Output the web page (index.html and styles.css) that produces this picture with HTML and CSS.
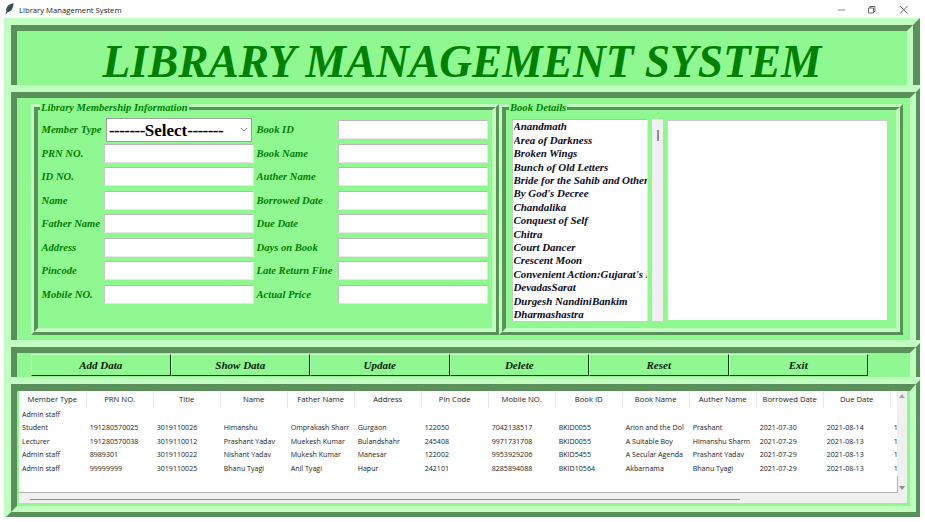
FILE: index.html
```html
<!DOCTYPE html>
<html lang="en">
<head>
<meta charset="utf-8">
<title>Library Management System</title>
<link rel="stylesheet" href="styles.css">
</head>
<body>
<header class="titlebar">
  <svg class="feather" viewBox="0 0 9 11"><path d="M8.6 0.2C5.2 0.6 2.2 2.6 1.4 5.4 1 6.8 1.1 7.8 1.4 8.6L0.6 10.6 1.5 10.9 2.4 9.2C5 9 7 7.2 7.8 4.6 8.3 3 8.5 1.6 8.6 0.2Z" fill="#3d4a63"/></svg>
  <span class="app-name">Library Management System</span>
  <div class="controls">
    <svg class="ctl" viewBox="0 0 10 10"><path d="M0 5H7" stroke="#8a8a8a" stroke-width="1" fill="none"/></svg>
    <svg class="ctl" viewBox="0 0 10 10"><path d="M0.5 3H5.5V8H0.5ZM2 3V1.5H7V6.5H5.5" stroke="#555" stroke-width="0.9" fill="none"/></svg>
    <svg class="ctl" viewBox="0 0 10 10"><path d="M2 1L9.5 8.5M9.5 1L2 8.5" stroke="#555" stroke-width="0.9" fill="none"/></svg>
  </div>
</header>
<main class="app">
  <section class="clip clip-title">
    <div class="ridge ridge-big h-title"><div class="groove groove-big title-inner">
      <h1 class="heading">LIBRARY MANAGEMENT SYSTEM</h1>
    </div></div>
  </section>
  <section class="clip clip-main">
    <div class="ridge ridge-big h-main wide"><div class="groove groove-big main-inner">
      <div class="ridge ridge-small box-member"><div class="groove groove-small member-inner">
        <div class="legend legend-member">Library Membership Information</div>
        <div class="form-grid">
          <label class="lbl">Member Type</label><div class="combo"><span class="combo-text"><span class="dash">-------</span>Select<span class="dash">-------</span></span><svg class="chev" viewBox="0 0 8 5"><path d="M1 1L4 4L7 1" stroke="#888" stroke-width="0.9" fill="none"/></svg></div>
          <label class="lbl">Book ID</label><input class="entry">
          <label class="lbl">PRN NO.</label><input class="entry">
          <label class="lbl">Book Name</label><input class="entry">
          <label class="lbl">ID NO.</label><input class="entry">
          <label class="lbl">Auther Name</label><input class="entry">
          <label class="lbl">Name</label><input class="entry">
          <label class="lbl">Borrowed Date</label><input class="entry">
          <label class="lbl">Father Name</label><input class="entry">
          <label class="lbl">Due Date</label><input class="entry">
          <label class="lbl">Address</label><input class="entry">
          <label class="lbl">Days on Book</label><input class="entry">
          <label class="lbl">Pincode</label><input class="entry">
          <label class="lbl">Late Return Fine</label><input class="entry">
          <label class="lbl">Mobile NO.</label><input class="entry">
          <label class="lbl">Actual Price</label><input class="entry">
        </div>
      </div></div>
      <div class="ridge ridge-small box-book"><div class="groove groove-small book-inner">
        <div class="legend legend-book">Book Details</div>
        <ul class="listbox">
          <li>Anandmath</li>
          <li>Area of Darkness</li>
          <li>Broken Wings</li>
          <li>Bunch of Old Letters</li>
          <li>Bride for the Sahib and Other</li>
          <li>By God's Decree</li>
          <li>Chandalika</li>
          <li>Conquest of Self</li>
          <li>Chitra</li>
          <li>Court Dancer</li>
          <li>Crescent Moon</li>
          <li>Convenient Action:Gujarat's R</li>
          <li>DevadasSarat</li>
          <li>Durgesh NandiniBankim</li>
          <li>Dharmashastra</li>
        </ul>
        <div class="list-scroll"><span class="list-thumb"></span></div>
        <div class="textbox"></div>
      </div></div>
    </div></div>
  </section>
  <section class="clip clip-buttons">
    <div class="ridge ridge-big h-buttons wide"><div class="groove groove-big buttons-inner">
      <button class="btn">Add Data</button>
      <button class="btn">Show Data</button>
      <button class="btn">Update</button>
      <button class="btn">Delete</button>
      <button class="btn">Reset</button>
      <button class="btn">Exit</button>
    </div></div>
  </section>
  <section class="clip clip-table">
    <div class="ridge ridge-big h-table wide"><div class="groove groove-big table-inner">
      <div class="table-top">
        <div class="table">
          <div class="thead">
            <span>Member Type</span><span>PRN NO.</span><span>Title</span><span>Name</span><span>Father Name</span><span>Address</span><span>Pin Code</span><span>Mobile NO.</span><span>Book ID</span><span>Book Name</span><span>Auther Name</span><span>Borrowed Date</span><span>Due Date</span><span></span>
          </div>
          <div class="trow"><span>Admin staff</span></div>
          <div class="trow"><span>Student</span><span>191280570025</span><span>3019110026</span><span>Himanshu</span><span>Omprakash Sharr</span><span>Gurgaon</span><span>122050</span><span>7042138517</span><span>BKID0055</span><span>Arion and the Dol</span><span>Prashant</span><span>2021-07-30</span><span>2021-08-14</span><span>1</span></div>
          <div class="trow"><span>Lecturer</span><span>191280570038</span><span>3019110012</span><span>Prashant Yadav</span><span>Muekesh Kumar</span><span>Bulandshahr</span><span>245408</span><span>9971731708</span><span>BKID0055</span><span>A Suitable Boy</span><span>Himanshu Sharm</span><span>2021-07-29</span><span>2021-08-13</span><span>1</span></div>
          <div class="trow"><span>Admin staff</span><span>8989301</span><span>3019110022</span><span>Nishant Yadav</span><span>Mukesh Kumar</span><span>Manesar</span><span>122002</span><span>9953929206</span><span>BKID5455</span><span>A Secular Agenda</span><span>Prashant Yadav</span><span>2021-07-29</span><span>2021-08-13</span><span>1</span></div>
          <div class="trow"><span>Admin staff</span><span>99999999</span><span>3019110025</span><span>Bhanu Tyagi</span><span>Anil Tyagi</span><span>Hapur</span><span>242101</span><span>8285894088</span><span>BKID10564</span><span>Akbarnama</span><span>Bhanu Tyagi</span><span>2021-07-29</span><span>2021-08-13</span><span>1</span></div>
        </div>
        <div class="vscroll">
          <svg class="arrow" viewBox="0 0 6 4"><path d="M3 0L6 4H0Z" fill="#a8a8a8"/></svg>
          <svg class="arrow" viewBox="0 0 6 4"><path d="M0 0H6L3 4Z" fill="#8c8c8c"/></svg>
        </div>
      </div>
      <div class="hscroll"><span class="hthumb"></span></div>
    </div></div>
  </section>
</main>
</body>
</html>
```
FILE: styles.css
```css
* { box-sizing: border-box; }
html, body { margin: 0; padding: 0; }
body { width: 925px; height: 522px; background: #fff; overflow: hidden; font-family: "Liberation Serif", serif; }

.titlebar { height: 18px; display: flex; align-items: center; padding-left: 5px; background: #fff; }
.feather { width: 9px; height: 11px; margin-top: -1px; }
.app-name { margin-left: 5px; font: 7.7px/18px "Open Sans", sans-serif; color: #222; margin-top: 1px; }
.controls { margin-left: auto; display: flex; padding-right: 17px; gap: 20px; margin-top: 2px; }
.ctl { width: 10px; height: 10px; }

.app { margin: 0 5px 0 4px; width: 916px; }
.clip { overflow: hidden; }
.clip-title { height: 67px; }
.clip-main { height: 255px; }
.clip-buttons { height: 37px; }
.clip-table { height: 140px; }
.h-title { height: 90px; }
.h-main { height: 280px; }
.h-buttons { height: 60px; }
.h-table { height: 142px; }
.wide { width: 919px; }

.ridge-big { border: 7px solid; border-color: #c1ffc1 #5a915a #5a915a #c1ffc1; }
.groove-big { border: 6px solid; border-color: #5a915a #c1ffc1 #c1ffc1 #5a915a; height: 100%; background: #90f890; }
.ridge-small { border: 3px solid; border-color: #c1ffc1 #5a915a #5a915a #c1ffc1; }
.groove-small { border: 4px solid; border-top-width: 3px; border-color: #5a915a #c1ffc1 #c1ffc1 #5a915a; height: 100%; background: #90f890; position: relative; }

.title-inner { text-align: center; }
.heading { margin: 0; font: italic bold 45.4px/40px "Liberation Serif", serif; color: #008000; padding-top: 11px; white-space: nowrap; }

.main-inner { display: flex; padding: 6px 0 0 14px; }
.box-member { width: 468px; height: 231px; }
.box-book { width: 404px; height: 231px; }
.legend { position: absolute; top: -9px; background: #90f890; font: italic bold 10.6px/13px "Liberation Serif", serif; color: #008000; padding: 0 1px; white-space: nowrap; }
.legend-member { left: 2px; }
.legend-book { left: 3px; }

.form-grid { display: grid; grid-template-columns: 62.5px 150px 84px 150px; grid-auto-rows: 23.5px; padding: 8px 0 0 3.5px; align-items: center; }
.lbl { font: italic bold 10.6px/14px "Liberation Serif", serif; color: #008000; white-space: nowrap; padding-top: 1px; }
.lbl:nth-child(4n+3) { padding-left: 2.5px; }
.entry { width: 150px; height: 19px; background: #fff; border: 0; border-top: 1px solid #b8b8b8; border-left: 1px solid #c8c8c8; border-right: 1px solid #e6e6e6; border-bottom: 1px solid #e6e6e6; padding: 0; margin: 0; display: block; }
.combo { width: 146px; height: 24px; margin-left: 2px; background: #fff; border: 1px solid #a0a0a0; display: flex; align-items: center; padding-left: 2px; position: relative; }
.combo-text { font: bold 17px/22px "Liberation Serif", serif; color: #000; white-space: nowrap; padding-top: 2px; }
.dash { letter-spacing: -0.55px; }
.chev { width: 8px; height: 5px; margin-left: auto; margin-right: 3px; }

.book-inner { display: flex; align-items: flex-start; padding: 9px 0 0 6px; }
.listbox { list-style: none; margin: 0; padding: 0.3px 0 0 0.5px; width: 136px; height: 202px; background: #fff; border-top: 1px solid #b8b8b8; border-left: 1px solid #c8c8c8; border-right: 1px solid #e6e6e6; overflow: hidden; }
.listbox li { font: italic bold 10.9px/13.4px "Liberation Serif", serif; color: #0a0a20; white-space: nowrap; overflow: hidden; }
.list-scroll { width: 11px; height: 202px; margin-left: 4px; background: #f0f0f0; padding: 11px 0 0 5px; }
.list-thumb { display: block; width: 1.5px; height: 11px; background: #8f8f8f; }
.textbox { width: 220px; height: 200px; margin: 1px 0 0 4px; background: #fff; border-top: 1px solid #c8c8c8; border-left: 1px solid #d8d8d8; }

.buttons-inner { display: flex; padding: 1px 0 0 14px; }
.btn { width: 139.5px; height: 22px; padding: 0; background: #90f890; border: 1px solid; border-color: #c1ffc1 #14381a #14381a #c1ffc1; font: italic bold 11px/20px "Liberation Serif", serif; color: #0a1a0a; }

.table-inner { padding: 0 0 0 2px; border-top-width: 7px; }
.table-top { display: flex; }
.table { width: 878px; height: 102px; background: #fff; overflow: hidden; border-bottom: 1px solid #b5b5b5; font: 7.1px/13.4px "Open Sans", sans-serif; color: #1c1c1c; }
.thead, .trow { display: grid; grid-template-columns: 67.7px repeat(13, 67px); }
.thead { height: 17px; font-size: 7.7px; }
.thead span { line-height: 16px; height: 17px; text-align: center; border-right: 1px solid #eaeaea; overflow: hidden; white-space: nowrap; }
.trow { height: 13.4px; }
.trow span { padding-left: 3px; overflow: hidden; white-space: nowrap; }
.vscroll { width: 10px; height: 102px; background: linear-gradient(#b5b5b5, #b5b5b5) left bottom / 1px 17px no-repeat, #f0f0f0; display: flex; flex-direction: column; justify-content: space-between; align-items: center; padding: 3px 0; }
.arrow { width: 6px; height: 4px; }
.hscroll { width: 888px; height: 10px; background: #f0f0f0; padding: 5.5px 0 0 11px; }
.hthumb { display: block; width: 710px; height: 1.5px; background: #8f8f8f; }
```
